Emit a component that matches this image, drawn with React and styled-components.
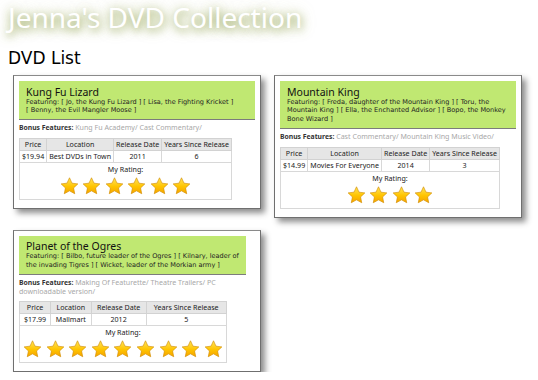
import React, { useId } from "react";
import styled, { createGlobalStyle } from "styled-components";

const GlobalStyle = createGlobalStyle`
  html, body { margin: 0; padding: 0; background: #ffffff; }
  body { font-family: "DejaVu Sans", "Noto Sans", sans-serif; color: #111; }
`;

const Page = styled.div`
  padding: 0 8px;
  width: 538px;
  box-sizing: border-box;
`;

const SiteTitle = styled.h1`
  margin: 0;
  font-family: "Noto Sans", "DejaVu Sans", sans-serif;
  font-size: 28px;
  line-height: 34px;
  font-weight: 400;
  color: #ffffff;
  text-shadow: 1px 3px 8px rgba(125, 145, 50, 0.75), 0 0 14px rgba(160, 175, 95, 0.6);
`;

const ListTitle = styled.h2`
  margin: 13px 0 0;
  font-size: 17px;
  line-height: 22px;
  font-weight: 400;
  color: #000;
`;

const CardGrid = styled.div`
  display: flex;
  flex-wrap: wrap;
  align-items: flex-start;
  gap: 12px 13px;
  margin-top: 6px;
  padding-left: 5px;
`;

const Card = styled.div`
  width: 248px;
  box-sizing: border-box;
  border: 1px solid #6f6f6f;
  border-top-color: #8a8a8a;
  background: #fff;
  padding: 5px;
  box-shadow: 4px 4px 6px rgba(0, 0, 0, 0.45);
`;

const Header = styled.div`
  background: #c0e872;
  border-bottom: 1px solid #7c7c7c;
  padding: 4.5px 4px 4.5px 7px;
  margin-right: ${(p) => p.$inset || 0}px;
`;

const MovieTitle = styled.div`
  font-family: "Noto Sans", "DejaVu Sans", sans-serif;
  font-size: 10.5px;
  line-height: 12px;
  color: #111;
`;

const Featuring = styled.div`
  font-size: 6.55px;
  line-height: 8.6px;
  color: #222;
`;

const Bonus = styled.div`
  margin: 3px 0 0;
  font-family: "Noto Sans", "DejaVu Sans", sans-serif;
  font-size: 7.1px;
  line-height: 8px;
  color: #a8a8a8;
`;

const BonusLabel = styled.span`
  font-weight: 700;
  font-size: 6.8px;
  color: #333;
`;

const InfoTable = styled.table`
  border-collapse: collapse;
  margin: 6px 0 3px;
  font-family: "Noto Sans", "DejaVu Sans", sans-serif;
  font-size: 7.1px;
  line-height: 9px;
  color: #222;
`;

const HeadCell = styled.th`
  background: #e6e6e6;
  border: 1px solid #d2d2d2;
  font-weight: 400;
  padding: 1px 2px;
  white-space: nowrap;
  text-align: center;
`;

const Cell = styled.td`
  border: 1px solid #d8d8d8;
  padding: 1px 2px;
  white-space: nowrap;
  text-align: center;
`;

const RatingCell = styled.td`
  border: 1px solid #d8d8d8;
  padding: 1px 3px 4px;
  text-align: center;
`;

const RatingLabel = styled.div`
  line-height: 10px;
`;

const Stars = styled.div`
  display: flex;
  justify-content: center;
  gap: 3.6px;
  margin-top: 3px;
`;

const StarSvg = styled.svg`
  width: 19px;
  height: 18px;
  display: block;
`;

function Star() {
  const id = useId().replace(/:/g, "");
  return (
    <StarSvg viewBox="0 0 24 23">
      <defs>
        <linearGradient id={`g${id}`} x1="0" y1="0" x2="0" y2="1">
          <stop offset="0" stopColor="#ffe45a" />
          <stop offset="0.55" stopColor="#ffc400" />
          <stop offset="1" stopColor="#f5a300" />
        </linearGradient>
      </defs>
      <path
        d="M12 1l3.2 6.9 7.5.9-5.5 5.2 1.5 7.4L12 17.7l-6.7 3.7 1.5-7.4L1.3 8.8l7.5-.9z"
        fill={`url(#g${id})`}
        stroke="#d08c00"
        strokeWidth="0.8"
        strokeLinejoin="round"
      />
    </StarSvg>
  );
}

const dvds = [
  {
    title: "Kung Fu Lizard",
    cast: ["Jo, the Kung Fu Lizard", "Lisa, the Fighting Kricket", "Benny, the Evil Mangler Moose"],
    bonus: "Kung Fu Academy/ Cast Commentary/",
    price: "$19.94",
    location: "Best DVDs in Town",
    release: "2011",
    years: "6",
    rating: 6,
  },
  {
    title: "Mountain King",
    cast: [
      "Freda, daughter of the Mountain King",
      "Toru, the Mountain King",
      "Ella, the Enchanted Advisor",
      "Bopo, the Monkey Bone Wizard",
    ],
    bonus: "Cast Commentary/ Mountain King Music Video/",
    price: "$14.99",
    location: "Movies For Everyone",
    release: "2014",
    years: "3",
    rating: 4,
  },
  {
    title: "Planet of the Ogres",
    cast: [
      "Bilbo, future leader of the Ogres",
      "Kilnary, leader of the invading Tigres",
      "Wicket, leader of the Morkian army",
    ],
    bonus: "Making Of Featurette/ Theatre Trailers/ PC downloadable version/",
    price: "$17.99",
    location: "Mallmart",
    release: "2012",
    years: "5",
    rating: 9,
    inset: 9,
  },
];

function DvdCard({ dvd }) {
  const featuring =
    "Featuring: " + dvd.cast.map((c) => `[\u00a0${c}\u00a0]`).join(" ");
  return (
    <Card>
      <Header $inset={dvd.inset}>
        <MovieTitle>{dvd.title}</MovieTitle>
        <Featuring>{featuring}</Featuring>
      </Header>
      <Bonus>
        <BonusLabel>Bonus Features:</BonusLabel> {dvd.bonus}
      </Bonus>
      <InfoTable>
        <thead>
          <tr>
            <HeadCell>Price</HeadCell>
            <HeadCell>Location</HeadCell>
            <HeadCell>Release Date</HeadCell>
            <HeadCell>Years Since Release</HeadCell>
          </tr>
        </thead>
        <tbody>
          <tr>
            <Cell>{dvd.price}</Cell>
            <Cell>{dvd.location}</Cell>
            <Cell>{dvd.release}</Cell>
            <Cell>{dvd.years}</Cell>
          </tr>
          <tr>
            <RatingCell colSpan={4}>
              <RatingLabel>My Rating:</RatingLabel>
              <Stars>
                {Array.from({ length: dvd.rating }, (_, i) => (
                  <Star key={i} />
                ))}
              </Stars>
            </RatingCell>
          </tr>
        </tbody>
      </InfoTable>
    </Card>
  );
}

export default function App() {
  return (
    <>
      <GlobalStyle />
      <Page>
        <SiteTitle>Jenna's DVD Collection</SiteTitle>
        <ListTitle>DVD List</ListTitle>
        <CardGrid>
          {dvds.map((d) => (
            <DvdCard key={d.title} dvd={d} />
          ))}
        </CardGrid>
      </Page>
    </>
  );
}
